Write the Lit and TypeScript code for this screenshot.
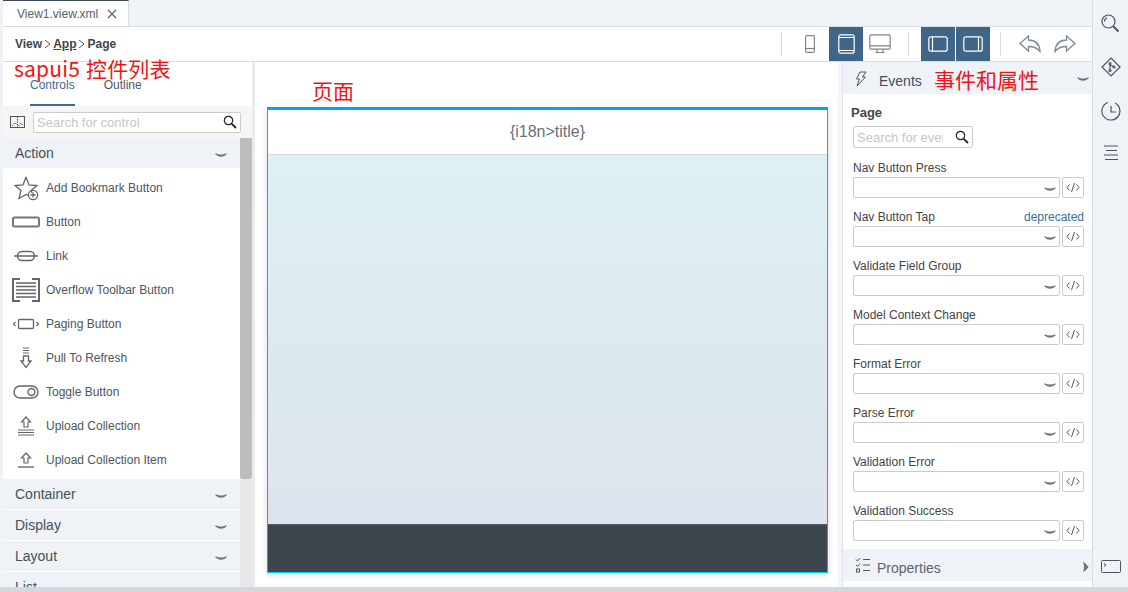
import { LitElement, html, css, svg } from "lit";
import { customElement } from "lit/decorators.js";

const chevron = html`<svg class="chev" width="12" height="7" viewBox="0 0 12 7"><path d="M.5 1.200 Q6 4 11.500 1.200 L11.500 2.400 Q6 7 .5 2.400Z" fill="#6b7480"/></svg>`;
const lens = html`<svg class="lens" width="14" height="14" viewBox="0 0 14 14" fill="none" stroke="#222"><circle cx="5.500" cy="5.500" r="4.200" stroke-width="1.200"/><path d="M8.800 8.800 13 13" stroke-width="1.800"/></svg>`;

const icons: Record<string, unknown> = {
  star: svg`<svg width="28" height="26" viewBox="0 0 28 26" fill="none" stroke="#666" stroke-width="1.300"><path d="M14 2 17 10 25 10.500 19 15.500 20 18M14 2 11 10 3 10.500 9 15.500 7 23.500 14 19.500 16 20.500"/><circle cx="21" cy="20" r="4.600"/><path d="M18.500 20h5M21 17.500v5"/></svg>`,
  button: svg`<svg width="28" height="12" viewBox="0 0 28 12" fill="none" stroke="#777" stroke-width="2"><rect x="1" y="1.500" width="26" height="9" rx="1.500"/></svg>`,
  link: svg`<svg width="26" height="12" viewBox="0 0 26 12" fill="none" stroke="#666" stroke-width="1.400"><rect x="4.500" y="1.500" width="17" height="9" rx="4.500"/><path d="M1 6h3.500M21.500 6H25M4.500 6H21.500"/></svg>`,
  overflow: svg`<svg width="30" height="24" viewBox="0 0 30 24" fill="none" stroke="#666"><path d="M9 1H2V23H9M21 1H28V23H21" stroke-width="2"/><path d="M5 5H25M5 8.500H25M5 12H25M5 15.500H25M5 19H25" stroke-width="1.400"/></svg>`,
  paging: svg`<svg width="28" height="12" viewBox="0 0 28 12" fill="none" stroke="#666"><rect x="6.500" y="1.500" width="15" height="9" rx="1" stroke-width="1.300"/><path d="M3.500 4 1.500 6 3.500 8M24.500 4 26.500 6 24.500 8" stroke-width="1.200"/></svg>`,
  pull: svg`<svg width="12" height="22" viewBox="0 0 12 22" fill="none" stroke="#666"><path d="M3 1H9M3 3.500H9M3 6H9" stroke-width="1"/><path d="M3.500 9V14H1L6 20.500 11 14H8.500V9Z" stroke-width="1.300"/></svg>`,
  toggle: svg`<svg width="26" height="14" viewBox="0 0 26 14" fill="none" stroke="#666" stroke-width="1.400"><rect x="1" y="1" width="24" height="12" rx="6"/><circle cx="18.500" cy="7" r="3.500"/></svg>`,
  upload: svg`<svg width="16" height="20" viewBox="0 0 16 20" fill="none" stroke="#666"><path d="M8 1 3.500 6H6V11H10V6H12.500Z" stroke-width="1.200"/><path d="M0 14H16M0 16.500H16M0 19H16" stroke-width="1.100"/></svg>`,
  uploadItem: svg`<svg width="18" height="16" viewBox="0 0 18 16" fill="none" stroke="#666"><path d="M9 1 4.500 6H7V11H11V6H13.500Z" stroke-width="1.200"/><path d="M1 15H17" stroke-width="1.400"/></svg>`,
};

const controls = [
  ["star", "Add Bookmark Button"], ["button", "Button"], ["link", "Link"],
  ["overflow", "Overflow Toolbar Button"], ["paging", "Paging Button"], ["pull", "Pull To Refresh"],
  ["toggle", "Toggle Button"], ["upload", "Upload Collection"], ["uploadItem", "Upload Collection Item"],
];
const events = ["Nav Button Press", "Nav Button Tap", "Validate Field Group", "Model Context Change", "Format Error", "Parse Error", "Validation Error", "Validation Success"];

@customElement("app-root")
export class AppRoot extends LitElement {
  static styles = css`
    :host { display: block; width: 1128px; height: 592px; position: relative; overflow: hidden; font-family: "Liberation Sans", Arial, sans-serif; font-size: 12px; color: #333; background: #eff2f7; }
    .shell { display: flex; height: 587px; }
    .main { width: 1089px; margin-left: 3px; display: flex; flex-direction: column; border-right: 1px solid #d9dce1; }
    .rail { flex: 1; display: flex; flex-direction: column; align-items: center; padding-top: 14px; }
    .rail svg { display: block; }
    .rail .top { display: flex; flex-direction: column; gap: 24px; align-items: center; }
    .rail .term { margin-top: auto; margin-bottom: 14px; }
    .status { height: 5px; background: #d3d8de; }

    .tabbar { height: 26px; display: flex; background: #eff2f7; border-bottom: 1px solid #d9dce1; flex: none; }
    .tab { width: 126px; height: 26px; box-sizing: border-box; border-top: 1px solid #3c4650; border-right: 1px solid #d9dce1; background: #fff; padding-left: 14px; display: flex; align-items: center; gap: 9px; color: #58626c; font-size: 12px; }
    .toolbar { height: 34px; flex: none; background: #fff; border-bottom: 1px solid #d9dce1; display: flex; align-items: center; padding-left: 12px; font-weight: bold; font-size: 12px; color: #3c4650; }
    .crumb { display: flex; align-items: center; gap: 2px; }
    .crumb u { color: #444; }
    .tools { margin-left: auto; display: flex; align-items: center; height: 100%; padding-right: 10px; }
    .sep { width: 1px; height: 24px; background: #d9dce1; }
    .tb { width: 34px; height: 34px; display: flex; align-items: center; justify-content: center; }
    .tb.on { background: #3f6588; }
    .tb.push { margin-left: 2px; }
    .sep.a { margin-right: 11px; }
    .tb.gap { margin-left: 1px; }
    .sep.b { margin: 0 12px 0 11px; }
    .sep.c { margin: 0 11px 0 10px; }
    .arrow { width: 35px; display: flex; justify-content: center; }

    .content { flex: 1; display: flex; min-height: 0; }
    .left { width: 249px; display: flex; flex-direction: column; background: #fff; flex: none; }
    .tabs { height: 44px; flex: none; display: flex; padding-left: 27px; gap: 29px; }
    .tabs div { height: 44px; box-sizing: border-box; padding-top: 16px; font-size: 12px; color: #4d5965; }
    .tabs .cur { color: #43698e; border-bottom: 2px solid #43698e; }
    .searchrow { height: 32px; flex: none; background: #f5f5f5; display: flex; align-items: center; padding: 0 0 0 7px; gap: 8px; }
    .search { box-sizing: border-box; border: 1px solid #ccc; border-radius: 2px; background: #fff; display: flex; align-items: center; justify-content: space-between; color: #c4c6c9; font-size: 13px; overflow: hidden; white-space: nowrap; }
    .search .lens { flex: none; }
    .searchrow .search { width: 208px; height: 21px; padding: 0 3px 0 3px; }
    .listwrap { flex: 1; display: flex; min-height: 0; overflow: hidden; }
    .list { width: 237px; flex: none; overflow: hidden; }
    .scroll { width: 12px; background: #e8e8e8; flex: none; }
    .thumb { height: 341px; background: #bdbdbd; border-radius: 0 0 3px 3px; }
    .group { height: 30px; box-sizing: border-box; background: #eff2f7; display: flex; align-items: center; justify-content: space-between; padding: 0 13px 0 12px; font-size: 14px; color: #46505a; margin-bottom: 1px; }
    .group.first { margin-bottom: 0; }
    .group .chev { margin-top: 4px; }
    .items { padding-top: 3px; height: 308px; box-sizing: border-box; margin-bottom: 3px; }
    .item { height: 34px; display: flex; align-items: center; color: #4c5660; font-size: 12px; }
    .ic { width: 43px; display: flex; align-items: center; justify-content: center; flex: none; padding-left: 3px; box-sizing: border-box; }

    .divider { width: 3px; background: #e9ebf0; flex: none; }
    .canvas { width: 583px; background: #fff; flex: none; padding: 45px 0 0 12px; box-sizing: border-box; }
    .frame { width: 561px; height: 466px; box-sizing: border-box; border: 1px solid #00b2ee; border-top: 3px solid #00a7eb; border-bottom: 1px solid #00ccff; box-shadow: 0 2px 6px rgba(0,0,0,.15); display: flex; flex-direction: column; }
    .fh { height: 45px; flex: none; background: #fff; border-bottom: 1px solid #d5d8dc; display: flex; align-items: center; justify-content: center; font-size: 16px; color: #6a7078; box-sizing: border-box; }
    .fb { flex: 1; background: linear-gradient(#ddf0f3, #dde3ec); }
    .ff { height: 48px; flex: none; background: #3d454d; border-top: 1px solid #535b63; box-sizing: border-box; }
    .gutter { width: 5px; background: #f4f5f8; border-right: 1px solid #e0e3e8; flex: none; box-sizing: border-box; }

    .right { flex: 1; display: flex; flex-direction: column; background: #fff; min-width: 0; }
    .ph { height: 32px; flex: none; background: #eff2f7; display: flex; align-items: center; padding-left: 12px; font-size: 14px; color: #46505a; }
    .ph .bolt { margin-top: 2px; }
    .ph .lbl { margin: 6px 0 0 12px; }
    .ph .end { margin-left: auto; margin-right: 3px; }
    .body { flex: 1; padding: 11px 8px 0 10px; min-height: 0; overflow: hidden; }
    .body h4 { margin: 0 0 6px -2px; font-size: 13px; line-height: 15px; color: #3c4650; }
    .body .search { width: 120px; height: 22px; padding: 0 4px 0 3px; margin-bottom: 13px; justify-content: flex-start; }
    .body .search span { width: 86px; overflow: hidden; flex: none; margin-right: 12px; }
    .field { height: 49px; }
    .flabel { height: 16px; display: flex; justify-content: space-between; color: #444; font-size: 12px; line-height: 14px; }
    .flabel em { font-style: normal; color: #3a6f9c; }
    .frow { display: flex; gap: 2px; }
    .sel { width: 207px; height: 21px; box-sizing: border-box; border: 1px solid #ccc; border-radius: 2px; display: flex; align-items: center; justify-content: flex-end; padding: 3px 3px 0 0; }
    .code { width: 22px; height: 21px; box-sizing: border-box; border: 1px solid #ccc; border-radius: 2px; display: flex; align-items: center; justify-content: center; }
    .ph.props { height: 32px; margin-bottom: 6px; }
    .ph.props .lbl { margin: 5px 0 0 6px; color: #5b6570; }
    .ph.props .end { margin: 3px 3px 0 auto; }

    .note { position: absolute; color: #f01414; font-family: "Noto Sans CJK SC", "Liberation Sans", sans-serif; font-size: 21px; line-height: 26px; white-space: nowrap; }
    .n1 { left: 14px; top: 55px; word-spacing: 1px; letter-spacing: .2px; }
    .n2 { left: 312px; top: 77px; }
    .n3 { left: 934px; top: 66px; }
  `;

  render() {
    const code = html`<svg width="14" height="11" viewBox="0 0 14 11" fill="none" stroke="#555" stroke-width="1"><path d="M3.500 2.500 1 5.500 3.500 8.500M10.500 2.500 13 5.500 10.500 8.500M8.500 1 5.500 10"/></svg>`;
    return html`
      <div class="shell">
        <div class="main">
          <div class="tabbar"><div class="tab">View1.view.xml
            <svg width="10" height="10" viewBox="0 0 10 10" stroke="#5a6570" stroke-width="1.300"><path d="M1 1 9 9M9 1 1 9"/></svg></div></div>
          <div class="toolbar">
            <div class="crumb"><span>View</span><svg width="7" height="10" viewBox="0 0 7 10" fill="none" stroke="#555"><path d="M1 1 6 5 1 9"/></svg><u>App</u><svg width="7" height="10" viewBox="0 0 7 10" fill="none" stroke="#555"><path d="M1 1 6 5 1 9"/></svg><span>Page</span></div>
            <div class="tools">
              <div class="sep a"></div>
              <div class="tb"><svg width="10" height="18" viewBox="0 0 10 18" fill="none" stroke="#7d858e" stroke-width="1.200"><rect x=".6" y=".6" width="8.800" height="16.800" rx="1.500"/><path d="M.6 13.500H9.400"/></svg></div>
              <div class="tb on push"><svg width="17" height="20" viewBox="0 0 17 20" fill="none" stroke="#fff" stroke-width="1.200"><rect x=".8" y=".8" width="15.400" height="18.400" rx="2"/><path d="M1 3.500H16M1 16.500H16"/></svg></div>
              <div class="tb"><svg width="22" height="20" viewBox="0 0 22 20" fill="none" stroke="#7d858e" stroke-width="1.200"><rect x=".8" y=".8" width="20.400" height="14.400" rx="1.500"/><path d="M1 11.800H21M8 15.500V18M14 15.500V18M6.500 18.500H15.500"/></svg></div>
              <div class="sep b"></div>
              <div class="tb on"><svg width="20" height="16" viewBox="0 0 20 16" fill="none" stroke="#fff" stroke-width="1.200"><rect x=".8" y=".8" width="18.400" height="14.400" rx="2"/><path d="M4.500 1V15"/></svg></div>
              <div class="tb on gap"><svg width="20" height="16" viewBox="0 0 20 16" fill="none" stroke="#fff" stroke-width="1.200"><rect x=".8" y=".8" width="18.400" height="14.400" rx="2"/><path d="M15.500 1V15"/></svg></div>
              <div class="sep c"></div>
              <div class="arrow"><svg width="22" height="18" viewBox="0 0 22 18" fill="none" stroke="#7d8a96" stroke-width="1.300"><path d="M1 8.500 9.500 1V5C16 5 20.500 9 21 16.500 18 12.500 14.500 11.500 9.500 11.500V16Z"/></svg></div>
              <div class="arrow"><svg width="22" height="18" viewBox="0 0 22 18" fill="none" stroke="#7d8a96" stroke-width="1.300"><path d="M21 8.500 12.500 1V5C6 5 1.500 9 1 16.500 4 12.500 7.500 11.500 12.500 11.500V16Z"/></svg></div>
            </div>
          </div>
          <div class="content">
            <div class="left">
              <div class="tabs"><div class="cur">Controls</div><div>Outline</div></div>
              <div class="searchrow">
                <svg width="15" height="12" viewBox="0 0 15 12" fill="none" stroke="#555"><rect x=".5" y=".5" width="14" height="11"/><path d="M7.500 .5V11.500M2 10 5 6.500 7 9M8.500 10 11 7 13.500 10" stroke-dasharray="1.500 1"/></svg>
                <div class="search"><span>Search for control</span>${lens}</div>
              </div>
              <div class="listwrap">
                <div class="list">
                  <div class="group first">Action ${chevron}</div>
                  <div class="items">
                    ${controls.map(([k, t]) => html`<div class="item"><div class="ic">${icons[k]}</div>${t}</div>`)}
                  </div>
                  <div class="group">Container ${chevron}</div>
                  <div class="group">Display ${chevron}</div>
                  <div class="group">Layout ${chevron}</div>
                  <div class="group">List</div>
                </div>
                <div class="scroll"><div class="thumb"></div></div>
              </div>
            </div>
            <div class="divider"></div>
            <div class="canvas">
              <div class="frame">
                <div class="fh">{i18n&gt;title}</div>
                <div class="fb"></div>
                <div class="ff"></div>
              </div>
            </div>
            <div class="gutter"></div>
            <div class="right">
              <div class="ph">
                <svg class="bolt" width="12" height="16" viewBox="0 0 12 16" fill="none" stroke="#555" stroke-width="1"><path d="M5 1H11L7.500 6H10.500L2 15 4.500 8H1.500Z"/></svg>
                <span class="lbl">Events</span>
                <span class="end">${chevron}</span>
              </div>
              <div class="body">
                <h4>Page</h4>
                <div class="search"><span>Search for events</span>${lens}</div>
                ${events.map(e => html`<div class="field">
                  <div class="flabel"><span>${e}</span>${e === "Nav Button Tap" ? html`<em>deprecated</em>` : ""}</div>
                  <div class="frow"><div class="sel">${chevron}</div><div class="code">${code}</div></div>
                </div>`)}
              </div>
              <div class="ph props">
                <svg width="16" height="16" viewBox="0 0 16 16" fill="none" stroke="#555" stroke-width="1"><path d="M1 2.500 2.500 4 5 1M1 8 2.500 9.500 5 6.500"/><rect x="1.500" y="12" width="3" height="3"/><path d="M8 2.500H15M8 8H15M8 13.500H15"/></svg>
                <span class="lbl">Properties</span>
                <svg class="end" width="7" height="12" viewBox="0 0 7 12"><path d="M1 .5 Q5 3.500 6.500 6 Q5 8.500 1 11.500 Q3 6 1 .5Z" fill="#6b7480"/></svg>
              </div>
            </div>
          </div>
        </div>
        <div class="rail">
          <div class="top">
            <svg width="19" height="19" viewBox="0 0 19 19" fill="none" stroke="#4a5560" stroke-width="1.200"><circle cx="7.500" cy="7.500" r="6.500"/><path d="M3.500 7.500A4 4 0 0 1 6 3.800"/><path d="M12 12 17.500 17.500" stroke-width="2"/></svg>
            <svg width="20" height="20" viewBox="0 0 20 20" fill="none" stroke="#4a5560" stroke-width="1.200"><path d="M10 1 19 10 10 19 1 10Z"/><circle cx="9" cy="6.500" r="1"/><circle cx="9" cy="13.500" r="1"/><circle cx="13" cy="10" r="1"/><path d="M9 7.500V12.500M9.500 8 12.500 9.500"/></svg>
            <svg width="20" height="20" viewBox="0 0 20 20" fill="none" stroke="#4a5560" stroke-width="1.200"><path d="M7 1.500A9 9 0 1 0 14 2"/><path d="M10 5V11H15"/></svg>
            <svg width="14" height="16" viewBox="0 0 14 16" fill="none" stroke="#4a5560" stroke-width="1.100"><path d="M0 1H14M2 5.500H13M0 10H14M1 14.500H14"/></svg>
          </div>
          <svg class="term" width="20" height="13" viewBox="0 0 20 13" fill="none" stroke="#4a5560" stroke-width="1"><rect x=".5" y=".5" width="19" height="12" rx="1"/><path d="M3 3.500 5 5 3 6.500"/></svg>
        </div>
      </div>
      <div class="status"></div>
      <div class="note n1">sapui5 控件列表</div>
      <div class="note n2">页面</div>
      <div class="note n3">事件和属性</div>
    `;
  }
}
